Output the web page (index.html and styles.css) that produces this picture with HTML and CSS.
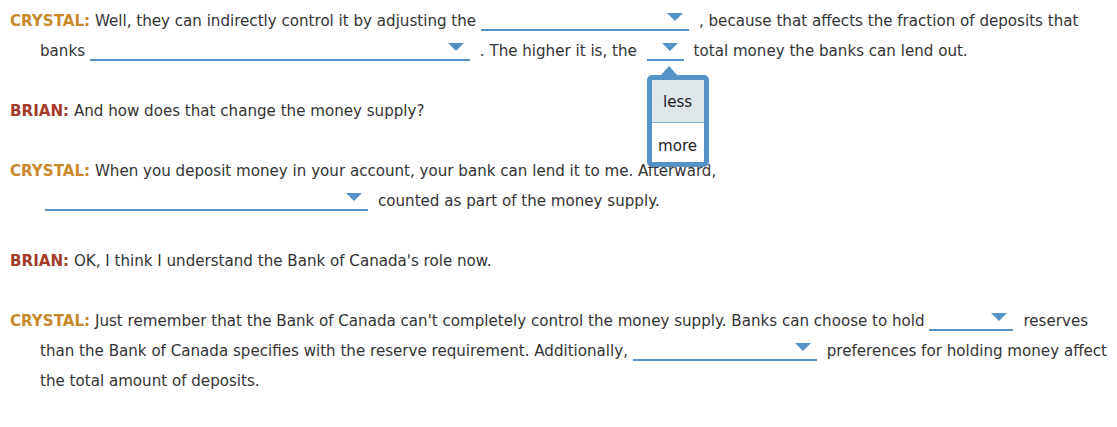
FILE: index.html
```html
<!DOCTYPE html>
<html lang="en">
<head>
    <meta charset="UTF-8">
    <title>Bank of Canada dialogue</title>
    <link rel="stylesheet" href="styles.css">
</head>
<body>
    <div class="dialog">
        <p class="line"><b class="crystal">CRYSTAL:</b> Well, they can indirectly control it by adjusting the <span class="dd w208"></span>, because that affects the fraction of deposits that<br>banks <span class="dd w380"></span>. The higher it is, the <span class="dd-wrap"><span class="dd w37"></span><span class="menu"><span class="menu-item active">less</span><span class="menu-item">more</span></span></span>total money the banks can lend out.</p>

        <p class="line"><b class="brian">BRIAN:</b> And how does that change the money supply?</p>

        <p class="line"><b class="crystal">CRYSTAL:</b> When you deposit money in your account, your bank can lend it to me. Afterward,<br><span class="dd w323 first"></span>counted as part of the money supply.</p>

        <p class="line"><b class="brian">BRIAN:</b> OK, I think I understand the Bank of Canada's role now.</p>

        <p class="line"><b class="crystal">CRYSTAL:</b> Just remember that the Bank of Canada can't completely control the money supply. Banks can choose to hold <span class="dd w84"></span>reserves<br>than the Bank of Canada specifies with the reserve requirement. Additionally, <span class="dd w184"></span>preferences for holding money affect<br>the total amount of deposits.</p>
    </div>
</body>
</html>
```

FILE: styles.css
```css
body {
    margin: 0;
    font-family: "DejaVu Sans", sans-serif;
    font-size: 15.1px;
    color: #333;
    background: #fff;
}
.dialog {
    padding: 6px 0 0 10px;
}
.line {
    margin: 0 0 30px 0;
    line-height: 30px;
    padding-left: 30px;
    text-indent: -30px;
    white-space: nowrap;
}
.crystal {
    color: #c7892b;
}
.brian {
    color: #a33b2b;
}
.dd {
    display: inline-block;
    position: relative;
    height: 20px;
    margin: 0 10px -5px 0;
    border-bottom: 2px solid #5592c8;
    text-indent: 0;
    vertical-align: baseline;
}
.dd::after {
    content: "";
    position: absolute;
    right: 6px;
    bottom: 8px;
    border-left: 8px solid transparent;
    border-right: 8px solid transparent;
    border-top: 8px solid #5592c8;
}
.dd.first {
    margin-left: 5px;
}
.w208 { width: 208px; }
.w380 { width: 380px; }
.w37 { width: 37px; }
.w323 { width: 323px; }
.w84 { width: 84px; }
.w184 { width: 184px; }

.dd-wrap {
    position: relative;
    display: inline-block;
    text-indent: 0;
    margin-left: 5px;
}
.menu {
    position: absolute;
    left: 0;
    top: 39px;
    z-index: 2;
    width: 52px;
    border: 5px solid #5592c8;
    border-radius: 5px;
    background: #fff;
}
.menu::before {
    content: "";
    position: absolute;
    left: 9px;
    top: -14px;
    border-left: 8px solid transparent;
    border-right: 8px solid transparent;
    border-bottom: 9px solid #5592c8;
}
.menu-item {
    display: block;
    height: 42px;
    line-height: 45px;
    text-align: center;
    color: #222;
}
.menu-item.active {
    background: #dfe6e9;
    border-bottom: 1px solid #7fb0d8;
}
.menu-item + .menu-item {
    height: 39px;
    line-height: 46px;
}
```
